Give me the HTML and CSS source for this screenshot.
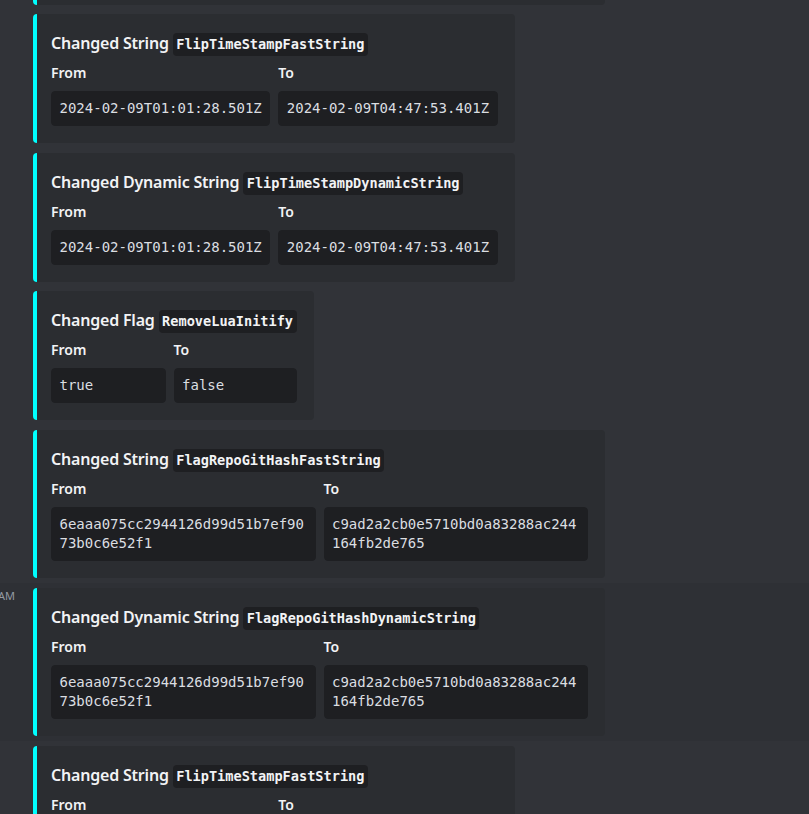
FILE: index.html
```html
<!DOCTYPE html>
<html lang="en">
<head>
  <meta charset="UTF-8" />
  <meta name="viewport" content="width=device-width, initial-scale=1.0"/>
  <title>Flag changes</title>
  <link rel="stylesheet" href="styles.css">
</head>
<body>

<div class="feed">

  <!-- MESSAGE: earlier update -->
  <div class="message">
    <div class="gutter"></div>
    <div class="embeds">

      <div class="embed">
        <div class="embed-title">Changed Dynamic String <code>FlagRepoGitHashDynamicString</code></div>
        <div class="fields">
          <div class="field">
            <div class="field-name">From</div>
            <pre class="field-value">3f1b9c27a0d84e6b5c12f7e0a9d3b6c48e21f05a</pre>
          </div>
          <div class="field">
            <div class="field-name">To</div>
            <pre class="field-value">6eaaa075cc2944126d99d51b7ef9073b0c6e52f1</pre>
          </div>
        </div>
      </div>

      <div class="embed">
        <div class="embed-title">Changed String <code>FlipTimeStampFastString</code></div>
        <div class="fields">
          <div class="field">
            <div class="field-name">From</div>
            <pre class="field-value">2024-02-09T01:01:28.501Z</pre>
          </div>
          <div class="field">
            <div class="field-name">To</div>
            <pre class="field-value">2024-02-09T04:47:53.401Z</pre>
          </div>
        </div>
      </div>

      <div class="embed">
        <div class="embed-title">Changed Dynamic String <code>FlipTimeStampDynamicString</code></div>
        <div class="fields">
          <div class="field">
            <div class="field-name">From</div>
            <pre class="field-value">2024-02-09T01:01:28.501Z</pre>
          </div>
          <div class="field">
            <div class="field-name">To</div>
            <pre class="field-value">2024-02-09T04:47:53.401Z</pre>
          </div>
        </div>
      </div>

      <div class="embed">
        <div class="embed-title">Changed Flag <code>RemoveLuaInitify</code></div>
        <div class="fields">
          <div class="field">
            <div class="field-name">From</div>
            <pre class="field-value">true</pre>
          </div>
          <div class="field">
            <div class="field-name">To</div>
            <pre class="field-value">false</pre>
          </div>
        </div>
      </div>

      <div class="embed">
        <div class="embed-title">Changed String <code>FlagRepoGitHashFastString</code></div>
        <div class="fields">
          <div class="field">
            <div class="field-name">From</div>
            <pre class="field-value">6eaaa075cc2944126d99d51b7ef9073b0c6e52f1</pre>
          </div>
          <div class="field">
            <div class="field-name">To</div>
            <pre class="field-value">c9ad2a2cb0e5710bd0a83288ac244164fb2de765</pre>
          </div>
        </div>
      </div>

    </div>
  </div>

  <!-- MESSAGE: hovered -->
  <div class="message hovered">
    <div class="gutter"><span class="timestamp">4:47 AM</span></div>
    <div class="embeds">
      <div class="embed">
        <div class="embed-title">Changed Dynamic String <code>FlagRepoGitHashDynamicString</code></div>
        <div class="fields">
          <div class="field">
            <div class="field-name">From</div>
            <pre class="field-value">6eaaa075cc2944126d99d51b7ef9073b0c6e52f1</pre>
          </div>
          <div class="field">
            <div class="field-name">To</div>
            <pre class="field-value">c9ad2a2cb0e5710bd0a83288ac244164fb2de765</pre>
          </div>
        </div>
      </div>
    </div>
  </div>

  <!-- MESSAGE: next update -->
  <div class="message">
    <div class="gutter"></div>
    <div class="embeds">
      <div class="embed">
        <div class="embed-title">Changed String <code>FlipTimeStampFastString</code></div>
        <div class="fields">
          <div class="field">
            <div class="field-name">From</div>
            <pre class="field-value">2024-02-09T04:47:53.401Z</pre>
          </div>
          <div class="field">
            <div class="field-name">To</div>
            <pre class="field-value">2024-02-09T08:12:06.914Z</pre>
          </div>
        </div>
      </div>
    </div>
  </div>

</div>

</body>
</html>
```

FILE: styles.css
```css
body {
  margin: 0;
  height: 814px;
  overflow: hidden;
  background: #313338;
  font-family: "Noto Sans", "Open Sans", sans-serif;
  color: #f2f3f5;
}

/* scrolled list of messages */
.feed {
  margin-top: -148.5px;
}
.message {
  display: flex;
  padding: 5px 0;
}
.message.hovered {
  background: #2e3035;
}
.gutter {
  width: 15px;
  margin-right: 18px;
  flex-shrink: 0;
  display: flex;
  justify-content: flex-end;
}
.timestamp {
  white-space: nowrap;
  font-size: 11px;
  line-height: 16px;
  color: #949ba4;
}

/* Embeds */
.embed {
  box-sizing: border-box;
  width: fit-content;
  max-width: 572px;
  background: #2b2d31;
  border-left: 4px solid #00ffff;
  border-radius: 4px;
  padding: 16px 17px 17px 14px;
}
.embed + .embed {
  margin-top: 9.5px;
}
.embed-title {
  font-size: 16px;
  font-weight: 600;
  line-height: 26px;
  letter-spacing: -0.2px;
  white-space: nowrap;
}
.embed-title code {
  display: inline-block;
  font-family: "DejaVu Sans Mono", monospace;
  font-size: 13.6px;
  font-weight: 700;
  line-height: 23px;
  letter-spacing: 0;
  padding: 0 3.5px;
  background: #1e1f22;
  border-radius: 4px;
}

.fields {
  display: grid;
  grid-template-columns: auto auto;
  column-gap: 8px;
  margin-top: 8px;
}
.field {
  min-width: 0;
}
.field-name {
  font-size: 14px;
  font-weight: 600;
  line-height: 18px;
}
.field-value {
  margin: 9px 0 0;
  padding: 7px 7.5px;
  background: #1e1f22;
  border: 1px solid #1e1f22;
  border-radius: 4px;
  font-family: "DejaVu Sans Mono", monospace;
  font-size: 14px;
  line-height: 19px;
  color: #dbdee1;
  white-space: pre-wrap;
  word-break: break-all;
}
```
